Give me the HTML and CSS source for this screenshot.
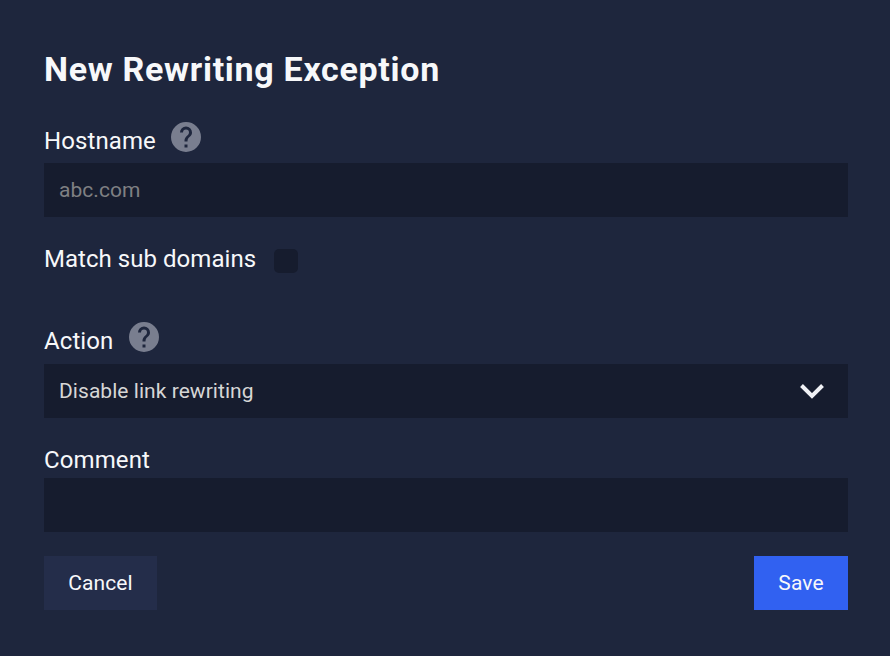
FILE: index.html
```html
<!DOCTYPE html>
<html lang="en">

<head>
    <meta charset="UTF-8">
    <meta name="viewport" content="width=device-width, initial-scale=1.0">
    <title>New Rewriting Exception</title>
    <link rel="stylesheet" href="styles.css">
</head>

<body>
    <form class="dialog">
        <h1>New Rewriting Exception</h1>

        <div class="field">
            <div class="label-row">
                <label for="hostname" class="hostname-label">Hostname</label>
                <svg class="help" viewBox="0 0 24 24"><path d="M12 0a12 12 0 1 0 0 24 12 12 0 0 0 0-24zm1.2 20.4h-2.4V18h2.4v2.4zm2.5-9.3-1.1 1.1c-.9.9-1.4 1.6-1.4 3.4h-2.4V15c0-1.3.5-2.5 1.4-3.4l1.5-1.5c.4-.4.7-1 .7-1.7a2.4 2.4 0 0 0-4.8 0H7.2a4.8 4.8 0 0 1 9.6 0c0 1.1-.4 2-1.1 2.7z"/></svg>
            </div>
            <input type="text" id="hostname" placeholder="abc.com">
        </div>

        <div class="check-row">
            <label for="subdomains">Match sub domains</label>
            <input type="checkbox" id="subdomains">
        </div>

        <div class="field action-field">
            <div class="label-row">
                <label for="action" class="action-label">Action</label>
                <svg class="help" viewBox="0 0 24 24"><path d="M12 0a12 12 0 1 0 0 24 12 12 0 0 0 0-24zm1.2 20.4h-2.4V18h2.4v2.4zm2.5-9.3-1.1 1.1c-.9.9-1.4 1.6-1.4 3.4h-2.4V15c0-1.3.5-2.5 1.4-3.4l1.5-1.5c.4-.4.7-1 .7-1.7a2.4 2.4 0 0 0-4.8 0H7.2a4.8 4.8 0 0 1 9.6 0c0 1.1-.4 2-1.1 2.7z"/></svg>
            </div>
            <button type="button" class="select" id="action">
                <span>Disable link rewriting</span>
                <svg class="chevron" viewBox="0 0 24 16"><path d="M1.5 2.5l10.5 10.5 10.5-10.5"/></svg>
            </button>
        </div>

        <div class="field comment-field">
            <div class="label-row">
                <label for="comment">Comment</label>
            </div>
            <input type="text" id="comment">
        </div>

        <div class="buttons">
            <button type="button" class="cancel">Cancel</button>
            <button type="button" class="save">Save</button>
        </div>
    </form>
</body>

</html>
```
FILE: styles.css
```css
* {
    box-sizing: border-box;
}
body {
    margin: 0;
    min-height: 656px;
    background: #1e263d;
    color: #f7f8fa;
    font-family: Roboto, sans-serif;
}
.dialog {
    padding: 49px 42px 46px 44px;
}
h1 {
    margin: 0;
    height: 73px;
    font-size: 34px;
    line-height: 40px;
    font-weight: 700;
    letter-spacing: 0.7px;
    white-space: nowrap;
}
.label-row {
    display: flex;
    height: 41px;
}
.label-row label {
    font-size: 24px;
    line-height: 38px;
    letter-spacing: 0.1px;
}
.hostname-label {
    width: 127px;
}
.action-label {
    width: 85px;
}
.help {
    width: 30px;
    height: 30px;
    fill: #797e8f;
}
input[type="text"],
.select {
    display: flex;
    align-items: center;
    justify-content: space-between;
    width: 100%;
    height: 54px;
    padding: 0 24px 0 15px;
    border: none;
    background: #161c2e;
    color: #d6d6d6;
    font-family: inherit;
    font-size: 21px;
    letter-spacing: 0.05px;
}
input[type="text"]::placeholder {
    color: #7f8083;
}
.check-row {
    display: flex;
    height: 105px;
    padding-top: 24px;
    font-size: 24px;
    line-height: 36px;
    letter-spacing: 0.04px;
}
.check-row label {
    width: 230px;
}
input[type="checkbox"] {
    appearance: none;
    width: 24px;
    height: 24px;
    margin: 8px 0 0;
    border-radius: 5px;
    background: #161c2e;
}
.action-field .label-row {
    height: 42px;
}
.chevron {
    width: 24px;
    height: 16px;
    fill: none;
    stroke: #f0f1f5;
    stroke-width: 4;
}
.comment-field .label-row {
    height: 60px;
    padding-top: 23px;
}
.buttons {
    display: flex;
    justify-content: space-between;
    margin-top: 24px;
}
.buttons button {
    height: 54px;
    border: none;
    color: #f7f8fa;
    font-family: inherit;
    font-size: 21px;
    letter-spacing: 0.1px;
}
.cancel {
    width: 113px;
    background: #242d4a;
}
.save {
    width: 94px;
    background: #3161f1;
}
```
